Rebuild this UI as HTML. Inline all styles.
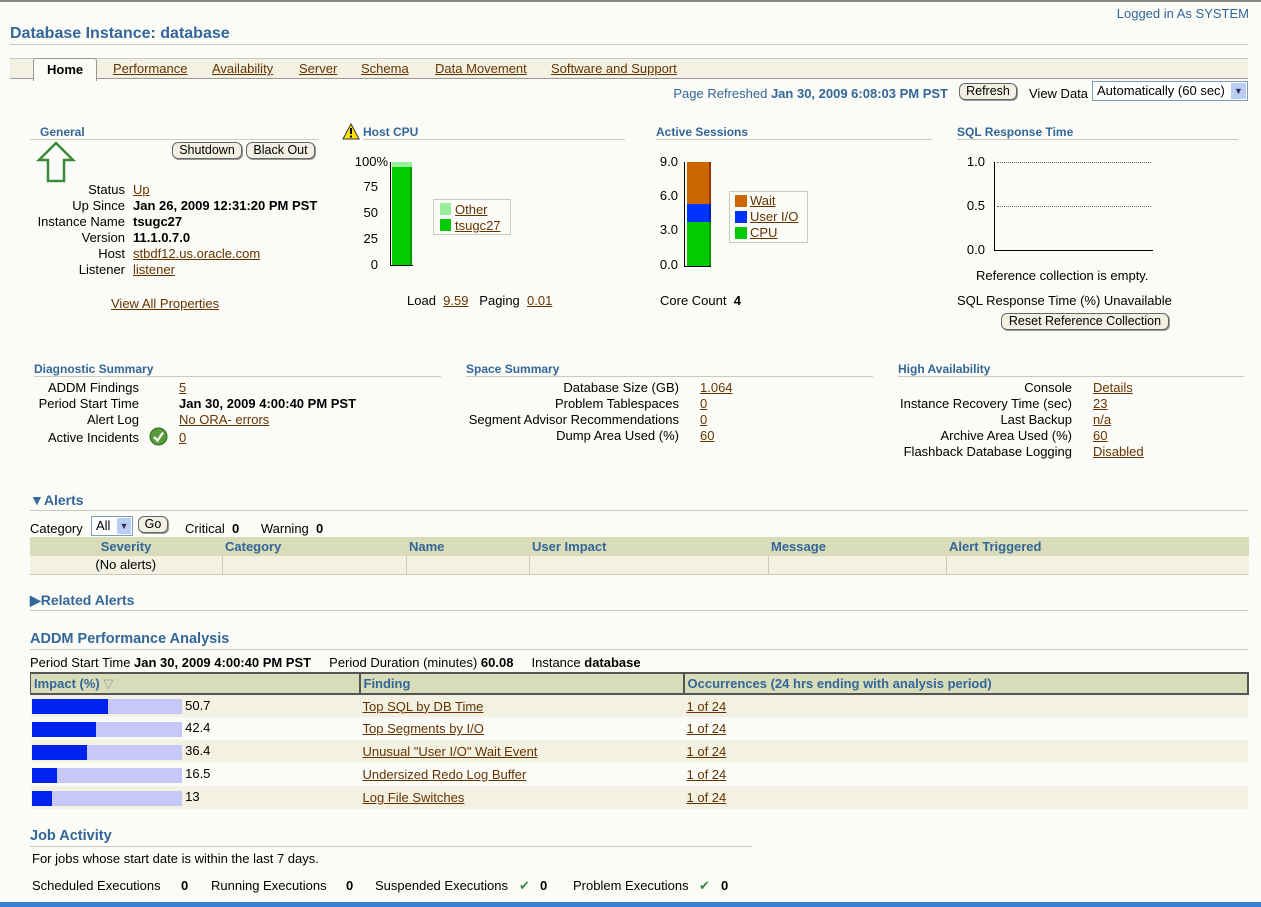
<!DOCTYPE html>
<html><head><meta charset="utf-8"><style>
*{margin:0;padding:0;box-sizing:border-box}
body{width:1261px;height:907px;background:#fbfcf7;font-family:"Liberation Sans",sans-serif;font-size:13px;color:#000;position:relative;overflow:hidden}
.a{position:absolute;white-space:nowrap}
a,.lk{color:#663300;text-decoration:underline}
.h{color:#336699;font-weight:bold;font-size:12px}
.hl{position:absolute;height:1px;background:#c9cbbf}
.b{font-weight:bold}
.btn{position:absolute;border:1px solid #666;border-radius:6px;background:#f1f0e2;font-size:12.5px;text-align:center;line-height:15px;height:17px;box-shadow:1px 1px 0 #999}
.r{text-align:right}
.ax{position:absolute;text-align:right;line-height:14px}
table{border-collapse:collapse;position:absolute}
td,th{font-size:13px;text-align:left;padding:0 3px}
</style></head><body>
<div style="position:absolute;left:0;top:0;width:1261px;height:2px;background:#888"></div>
<div class="a" style="right:12px;top:6px;color:#336699">Logged in As SYSTEM</div>
<div class="a" style="left:10px;top:25px;font-size:16px;color:#336699;font-weight:bold">Database Instance: database</div>
<div class="hl" style="left:10px;top:44px;width:1238px"></div>
<div style="position:absolute;left:10px;top:58px;width:1238px;height:21px;background:#f2f1e2;border-top:1px solid #c9cbbf;border-bottom:1px solid #999"></div>
<div style="position:absolute;left:33px;top:58px;width:64px;height:23px;background:#fbfcf7;border:1px solid #999;border-bottom:none;border-radius:3px 3px 0 0"></div>
<div class="a b" style="left:47px;top:62px;font-size:13px">Home</div>
<div class="a" style="left:113px;top:61px"><a>Performance</a></div>
<div class="a" style="left:212px;top:61px"><a>Availability</a></div>
<div class="a" style="left:299px;top:61px"><a>Server</a></div>
<div class="a" style="left:361px;top:61px"><a>Schema</a></div>
<div class="a" style="left:435px;top:61px"><a>Data Movement</a></div>
<div class="a" style="left:551px;top:61px"><a>Software and Support</a></div>
<div class="a" style="right:313px;top:86px;color:#336699">Page Refreshed <b>Jan 30, 2009 6:08:03 PM PST</b></div>
<div class="btn" style="left:959px;top:83px;width:58px">Refresh</div>
<div class="a" style="left:1029px;top:86px">View Data</div>
<div style="position:absolute;left:1092px;top:81px;width:156px;height:20px;border:1px solid #7f9db9;background:#fff;font-size:13px;padding:1px 4px">Automatically (60 sec)<span style="position:absolute;right:1px;top:1px;width:15px;height:16px;background:#b9cdf5;color:#335;text-align:center;font-size:9px;line-height:16px">&#9660;</span></div>

<!-- General -->
<div class="a h" style="left:40px;top:125px">General</div>
<div class="hl" style="left:30px;top:139px;width:288px"></div>
<svg class="a" style="left:36px;top:141px" width="40" height="42"><path d="M20 2 L37 19 L28 19 L28 40 L12 40 L12 19 L3 19 Z" fill="none" stroke="#3a8a3a" stroke-width="2.5"/></svg>
<div class="btn" style="left:172px;top:142px;width:70px">Shutdown</div>
<div class="btn" style="left:246px;top:142px;width:69px">Black Out</div>
<div class="a r" style="left:10px;top:182px;width:115px;line-height:16px">Status<br>Up Since<br>Instance Name<br>Version<br>Host<br>Listener</div>
<div class="a" style="left:133px;top:182px;line-height:16px"><a>Up</a><br><b>Jan 26, 2009 12:31:20 PM PST</b><br><b>tsugc27</b><br><b>11.1.0.7.0</b><br><a>stbdf12.us.oracle.com</a><br><a>listener</a></div>
<div class="a" style="left:111px;top:296px"><a>View All Properties</a></div>

<!-- Host CPU -->
<svg class="a" style="left:342px;top:123px" width="18" height="17"><path d="M9 1 L17 16 L1 16 Z" fill="#ffe000" stroke="#333"/><rect x="8" y="5" width="2" height="6" fill="#000"/><rect x="8" y="12.5" width="2" height="2" fill="#000"/></svg>
<div class="a h" style="left:363px;top:125px">Host CPU</div>
<div class="hl" style="left:363px;top:139px;width:262px"></div>
<div class="ax" style="left:340px;top:155px;width:48px">100%</div>
<div class="ax" style="left:340px;top:180px;width:38px">75</div>
<div class="ax" style="left:340px;top:206px;width:38px">50</div>
<div class="ax" style="left:340px;top:232px;width:38px">25</div>
<div class="ax" style="left:340px;top:258px;width:38px">0</div>
<div style="position:absolute;left:390px;top:162px;width:1px;height:104px;background:#000"></div>
<div style="position:absolute;left:390px;top:265px;width:23px;height:1px;background:#000"></div>
<div style="position:absolute;left:392px;top:162px;width:20px;height:5px;background:#99ee99"></div>
<div style="position:absolute;left:392px;top:167px;width:18px;height:98px;background:#00cc00"></div>
<div style="position:absolute;left:410px;top:167px;width:2px;height:98px;background:#009900"></div>
<div style="position:absolute;left:433px;top:199px;width:78px;height:36px;border:1px solid #c9cbbf"></div>
<div style="position:absolute;left:440px;top:203px;width:11px;height:12px;background:#99ee99"></div>
<div style="position:absolute;left:440px;top:219px;width:11px;height:12px;background:#00cc00"></div>
<div class="a" style="left:455px;top:202px;line-height:16px"><a>Other</a><br><a>tsugc27</a></div>
<div class="a" style="left:407px;top:293px">Load &nbsp;<a>9.59</a> &nbsp; Paging &nbsp;<a>0.01</a></div>

<!-- Active Sessions -->
<div class="a h" style="left:656px;top:125px">Active Sessions</div>
<div class="hl" style="left:656px;top:139px;width:276px"></div>
<div class="ax" style="left:648px;top:155px;width:30px">9.0</div>
<div class="ax" style="left:648px;top:189px;width:30px">6.0</div>
<div class="ax" style="left:648px;top:223px;width:30px">3.0</div>
<div class="ax" style="left:648px;top:258px;width:30px">0.0</div>
<div style="position:absolute;left:684px;top:162px;width:1px;height:105px;background:#000"></div>
<div style="position:absolute;left:684px;top:266px;width:27px;height:1px;background:#000"></div>
<div style="position:absolute;left:687px;top:162px;width:24px;height:42px;background:#cc6600;border-right:2px solid #993300"></div>
<div style="position:absolute;left:687px;top:204px;width:24px;height:18px;background:#0033ff;border-right:2px solid #0022aa"></div>
<div style="position:absolute;left:687px;top:222px;width:24px;height:44px;background:#00cc00;border-right:2px solid #009900"></div>
<div style="position:absolute;left:729px;top:191px;width:79px;height:52px;border:1px solid #c9cbbf"></div>
<div style="position:absolute;left:735px;top:195px;width:12px;height:12px;background:#cc6600"></div>
<div style="position:absolute;left:735px;top:211px;width:12px;height:12px;background:#0033ff"></div>
<div style="position:absolute;left:735px;top:227px;width:12px;height:12px;background:#00cc00"></div>
<div class="a" style="left:750px;top:193px;line-height:16px"><a>Wait</a><br><a>User I/O</a><br><a>CPU</a></div>
<div class="a" style="left:660px;top:293px">Core Count &nbsp;<b>4</b></div>

<!-- SQL -->
<div class="a h" style="left:957px;top:125px">SQL Response Time</div>
<div class="hl" style="left:957px;top:139px;width:281px"></div>
<div class="ax" style="left:950px;top:155px;width:35px">1.0</div>
<div class="ax" style="left:950px;top:199px;width:35px">0.5</div>
<div class="ax" style="left:950px;top:243px;width:35px">0.0</div>
<div style="position:absolute;left:994px;top:162px;width:1px;height:89px;background:#000"></div>
<div style="position:absolute;left:994px;top:250px;width:159px;height:1px;background:#000"></div>
<div style="position:absolute;left:997px;top:162px;width:154px;border-top:1px dotted #666"></div>
<div style="position:absolute;left:997px;top:206px;width:154px;border-top:1px dotted #666"></div>
<div class="a" style="left:976px;top:268px">Reference collection is empty.</div>
<div class="a" style="left:957px;top:293px">SQL Response Time (%) Unavailable</div>
<div class="btn" style="left:1001px;top:313px;width:168px">Reset Reference Collection</div>

<!-- Diagnostic -->
<div class="a h" style="left:34px;top:362px">Diagnostic Summary</div>
<div class="hl" style="left:34px;top:376px;width:407px"></div>
<div class="a r" style="left:10px;top:380px;width:129px;line-height:16px">ADDM Findings<br>Period Start Time<br>Alert Log<br><span style="line-height:20px">Active Incidents</span></div>
<svg class="a" style="left:149px;top:427px" width="19" height="19"><circle cx="9.5" cy="9.5" r="8.5" fill="#5a9a3a" stroke="#2a6a1a"/><path d="M5 10 L8.5 13.5 L14 5.5" fill="none" stroke="#fff" stroke-width="2.2"/></svg>
<div class="a" style="left:179px;top:380px;line-height:16px"><a>5</a><br><b>Jan 30, 2009 4:00:40 PM PST</b><br><a>No ORA- errors</a><br><span style="line-height:20px"><a>0</a></span></div>

<div class="a h" style="left:466px;top:362px">Space Summary</div>
<div class="hl" style="left:466px;top:376px;width:407px"></div>
<div class="a r" style="left:440px;top:380px;width:239px;line-height:16px">Database Size (GB)<br>Problem Tablespaces<br>Segment Advisor Recommendations<br>Dump Area Used (%)</div>
<div class="a" style="left:700px;top:380px;line-height:16px"><a>1.064</a><br><a>0</a><br><a>0</a><br><a>60</a></div>

<div class="a h" style="left:898px;top:362px">High Availability</div>
<div class="hl" style="left:898px;top:376px;width:346px"></div>
<div class="a r" style="left:870px;top:380px;width:202px;line-height:16px">Console<br>Instance Recovery Time (sec)<br>Last Backup<br>Archive Area Used (%)<br>Flashback Database Logging</div>
<div class="a" style="left:1093px;top:380px;line-height:16px"><a>Details</a><br><a>23</a><br><a>n/a</a><br><a>60</a><br><a>Disabled</a></div>

<!-- Alerts -->
<div class="a" style="left:30px;top:492px;font-size:14px;color:#336699;font-weight:bold">&#9660;Alerts</div>
<div class="hl" style="left:30px;top:510px;width:1218px"></div>
<div class="a" style="left:30px;top:521px">Category</div>
<div style="position:absolute;left:91px;top:516px;width:42px;height:20px;border:1px solid #7f9db9;background:#fff;padding:1px 4px">All<span style="position:absolute;right:1px;top:1px;width:14px;height:16px;background:#b9cdf5;font-size:9px;text-align:center;line-height:16px;color:#335">&#9660;</span></div>
<div class="btn" style="left:138px;top:516px;width:30px">Go</div>
<div class="a" style="left:185px;top:521px">Critical &nbsp;<b>0</b> &nbsp; &nbsp; &nbsp;Warning &nbsp;<b>0</b></div>
<table style="left:30px;top:537px;width:1219px">
<tr style="background:#d9dcb8;height:19px;color:#336699"><th style="width:192px;text-align:center">Severity</th><th style="width:184px">Category</th><th style="width:123px">Name</th><th style="width:239px">User Impact</th><th style="width:178px">Message</th><th>Alert Triggered</th></tr>
<tr style="background:#f2f1e2;height:18px;border-bottom:1px solid #c9cbbf"><td style="text-align:center;border-right:1px solid #c9cbbf">(No alerts)</td><td style="border-right:1px solid #c9cbbf"></td><td style="border-right:1px solid #c9cbbf"></td><td style="border-right:1px solid #c9cbbf"></td><td style="border-right:1px solid #c9cbbf"></td><td></td></tr>
</table>
<div class="a" style="left:30px;top:592px;font-size:14px;color:#336699;font-weight:bold">&#9654;Related Alerts</div>
<div class="hl" style="left:30px;top:610px;width:1218px"></div>

<!-- ADDM -->
<div class="a" style="left:30px;top:631px;font-size:14.5px;color:#336699;font-weight:bold">ADDM Performance Analysis</div>
<div class="hl" style="left:30px;top:649px;width:1218px"></div>
<div class="a" style="left:30px;top:655px">Period Start Time <b>Jan 30, 2009 4:00:40 PM PST</b> &nbsp; &nbsp; Period Duration (minutes) <b>60.08</b> &nbsp; &nbsp; Instance <b>database</b></div>
<table style="left:30px;top:672px;width:1219px">
<tr style="background:#d9dcb8;height:21px;color:#336699;border:2px solid #555;border-width:2px 2px 2px 1px"><th style="width:329px;border-right:2px solid #555">Impact (%) <span style="color:#999;font-weight:normal">&#9661;</span></th><th style="width:324px;border-right:2px solid #555">Finding</th><th>Occurrences (24 hrs ending with analysis period)</th></tr>
<tr style="height:23px;background:#f2f1e2"><td style="padding-left:1px"><span style="display:inline-block;width:150px;height:15px;background:#c8c8f8;vertical-align:middle"><span style="display:block;width:76px;height:15px;background:#0022ee"></span></span> 50.7</td><td><a>Top SQL by DB Time</a></td><td><a>1 of 24</a></td></tr>
<tr style="height:23px;background:#fbfcf7"><td style="padding-left:1px"><span style="display:inline-block;width:150px;height:15px;background:#c8c8f8;vertical-align:middle"><span style="display:block;width:64px;height:15px;background:#0022ee"></span></span> 42.4</td><td><a>Top Segments by I/O</a></td><td><a>1 of 24</a></td></tr>
<tr style="height:23px;background:#f2f1e2"><td style="padding-left:1px"><span style="display:inline-block;width:150px;height:15px;background:#c8c8f8;vertical-align:middle"><span style="display:block;width:55px;height:15px;background:#0022ee"></span></span> 36.4</td><td><a>Unusual "User I/O" Wait Event</a></td><td><a>1 of 24</a></td></tr>
<tr style="height:23px;background:#fbfcf7"><td style="padding-left:1px"><span style="display:inline-block;width:150px;height:15px;background:#c8c8f8;vertical-align:middle"><span style="display:block;width:25px;height:15px;background:#0022ee"></span></span> 16.5</td><td><a>Undersized Redo Log Buffer</a></td><td><a>1 of 24</a></td></tr>
<tr style="height:23px;background:#f2f1e2"><td style="padding-left:1px"><span style="display:inline-block;width:150px;height:15px;background:#c8c8f8;vertical-align:middle"><span style="display:block;width:20px;height:15px;background:#0022ee"></span></span> 13</td><td><a>Log File Switches</a></td><td><a>1 of 24</a></td></tr>
</table>

<!-- Job -->
<div class="a" style="left:30px;top:828px;font-size:14.5px;color:#336699;font-weight:bold">Job Activity</div>
<div class="hl" style="left:30px;top:846px;width:722px"></div>
<div class="a" style="left:32px;top:851px">For jobs whose start date is within the last 7 days.</div>
<div class="a" style="left:32px;top:878px">Scheduled Executions</div><div class="a b" style="left:181px;top:878px">0</div>
<div class="a" style="left:211px;top:878px">Running Executions</div><div class="a b" style="left:346px;top:878px">0</div>
<div class="a" style="left:375px;top:878px">Suspended Executions</div><div class="a" style="left:519px;top:878px;color:#3a8a3a">&#10004;</div><div class="a b" style="left:540px;top:878px">0</div>
<div class="a" style="left:573px;top:878px">Problem Executions</div><div class="a" style="left:699px;top:878px;color:#3a8a3a">&#10004;</div><div class="a b" style="left:721px;top:878px">0</div>
<div style="position:absolute;left:0;top:902px;width:1261px;height:5px;background:#3b7fd4"></div>
</body></html>
